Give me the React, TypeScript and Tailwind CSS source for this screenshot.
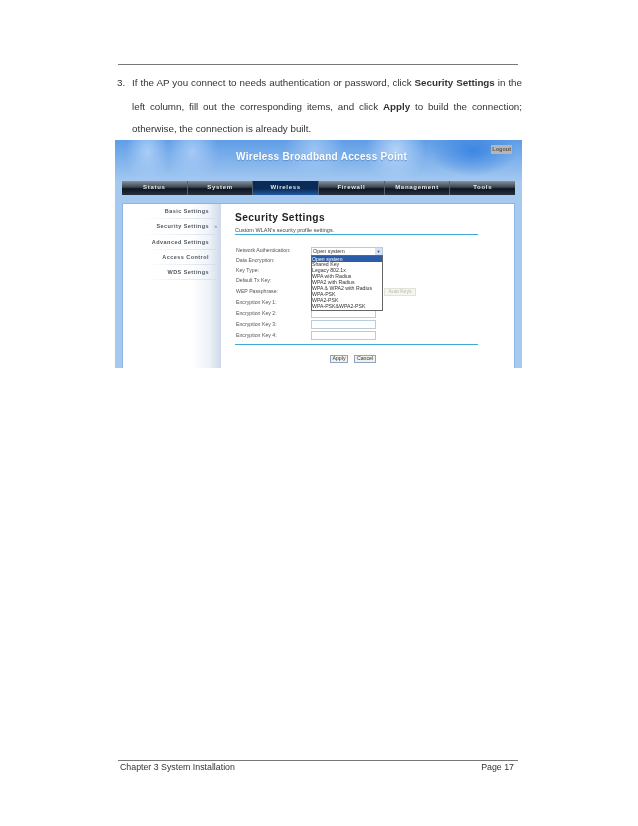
const tabs = ['Status', 'System', 'Wireless', 'Firewall', 'Management', 'Tools']
const sideItems = ['Basic Settings', 'Security Settings', 'Advanced Settings', 'Access Control', 'WDS Settings']
const options = [
  'Open system',
  'Shared Key',
  'Legacy 802.1x',
  'WPA with Radius',
  'WPA2 with Radius',
  'WPA & WPA2 with Radius',
  'WPA-PSK',
  'WPA2-PSK',
  'WPA-PSK&WPA2-PSK',
]

function FormRow({ label, height, input }: { label: string; height: string; input?: boolean }) {
  return (
    <div className={`flex items-center ${height}`}>
      <div className="w-[75px] text-[5.2px] text-[#555]">{label}</div>
      {input && <div className="h-[9px] w-[65px] border border-[#b8ccdc] bg-white" />}
    </div>
  )
}

function RouterPanel() {
  return (
    <div className="flex h-[228px] w-[407px] flex-col bg-[#a6c9ef] px-[7px] font-['Liberation_Sans',sans-serif]">
      {/* banner */}
      <div className="relative -mx-[7px] h-[41px] bg-[radial-gradient(ellipse_22px_36px_at_8%_30%,#a9cdf6_0%,transparent_100%),radial-gradient(ellipse_26px_36px_at_19%_30%,#a4c9f5_0%,transparent_100%),radial-gradient(ellipse_30px_34px_at_49%_25%,#9cc4f3_0%,transparent_100%),radial-gradient(ellipse_30px_34px_at_69%_25%,#b4d3f7_0%,transparent_100%),radial-gradient(ellipse_44px_26px_at_88%_25%,#3d86e2_0%,transparent_100%),linear-gradient(to_bottom,#5f9de7,#a3c8f0)]">
        <div className="absolute left-[121px] top-[9px] text-[10px] font-bold tracking-[0.3px] text-white [text-shadow:0_1px_1px_#5c8fcc]">
          Wireless Broadband Access Point
        </div>
        <div className="absolute right-[10px] top-[5px] bg-[#b8b6b4] px-[1px] py-[1px] text-[5.5px] font-bold leading-[7px] text-[#555]">
          Logout
        </div>
      </div>

      {/* nav */}
      <div className="flex h-[14px] bg-[linear-gradient(to_bottom,#8a929c,#39434e_45%,#0c1622_55%,#27323e)]">
        {tabs.map((tab) => (
          <div
            key={tab}
            className={`flex flex-1 items-center justify-center border-r border-[#56616d] pb-[1px] text-[6px] font-bold tracking-[0.7px] text-[#e4e8ec] last:border-0 ${
              tab === 'Wireless' ? 'bg-[linear-gradient(to_bottom,#0b2a55,#0a2a58_55%,#1f5aa0)]' : ''
            }`}
          >
            {tab}
          </div>
        ))}
      </div>

      {/* body */}
      <div className="mt-[8px] flex min-h-0 flex-1 border-x border-t border-[#8fb4e4] bg-white">
        <div className="w-[98px] shrink-0 bg-[linear-gradient(to_right,#ffffff_70%,#eef2f8_88%,#cdd9ea)]">
          {sideItems.map((item) => (
            <div key={item} className="relative flex h-[15.3px] flex-col">
              <div className="flex flex-1 items-center justify-end pr-[12px] text-[5.5px] font-bold tracking-[0.45px] text-[#4d5560]">
                {item}
              </div>
              <div className="ml-[20px] h-px bg-[linear-gradient(to_right,transparent,#d5dfeb)]" />
              {item === 'Security Settings' && (
                <span className="absolute right-[4px] top-[4px] text-[5px] text-[#5b86c4]">»</span>
              )}
            </div>
          ))}
        </div>
        <div className="relative min-w-0 flex-1 pl-[14px]">
          <div className="mt-[7px] text-[10.2px] font-bold leading-[13px] tracking-[0.4px] text-[#222]">Security Settings</div>
          <div className="mt-[3px] text-[5.5px] leading-[7px] text-[#444]">Custom WLAN's security profile settings.</div>
          <div className="h-px w-[243px] bg-[#3fa9dc]" />

          <div className="mt-[11px] w-[243px] pl-[1px]">
            <FormRow label="Network Authentication:" height="h-[10px]" />
            <FormRow label="Data Encryption:" height="h-[10px]" />
            <FormRow label="Key Type:" height="h-[10px]" />
            <FormRow label="Default Tx Key:" height="h-[10px]" />
            <FormRow label="WEP Passphrase:" height="h-[11px]" />
            <FormRow label="Encryption Key 1:" height="h-[11px]" />
            <FormRow label="Encryption Key 2:" height="h-[11px]" input />
            <FormRow label="Encryption Key 3:" height="h-[11px]" input />
            <FormRow label="Encryption Key 4:" height="h-[11px]" input />
          </div>
          <div className="mt-[3px] h-px w-[243px] bg-[#3fa9dc]" />
          <div className="mt-[10px] flex w-[243px] gap-[6px] pl-[95px]">
            <div className="flex h-[8px] w-[18px] items-center justify-center border border-[#8fa3c4] bg-[#f1f1ec] text-[5.2px] text-[#333]">Apply</div>
            <div className="flex h-[8px] w-[22px] items-center justify-center border border-[#8fa3c4] bg-[#f1f1ec] text-[5.2px] text-[#333]">Cancel</div>
          </div>

          {/* select + open list */}
          <div className="absolute left-[90px] top-[43px] flex h-[9px] w-[72px] items-center justify-between border border-[#b8ccdc] bg-white pl-[1px] text-[5.4px] text-[#333]">
            Open system
            <div className="flex h-full w-[7px] items-center justify-center bg-[#d5e2f5] text-[4px] leading-none text-[#2b4c8c]">▼</div>
          </div>
          <div className="absolute left-[90px] top-[51px] w-[72px] border border-[#666] bg-white text-[5.2px] leading-[5.9px] text-[#333]">
            {options.map((opt, i) => (
              <div key={opt} className={i === 0 ? 'bg-[#2a5caa] leading-[6.4px] text-white' : ''}>
                {opt}
              </div>
            ))}
          </div>
          <div className="absolute left-[163px] top-[84px] flex h-[8px] w-[32px] items-center justify-center border border-[#e2e2d8] bg-[#f6f6f0] text-[5px] text-[#b8b8b0]">
            Auto Keys
          </div>
        </div>
      </div>
    </div>
  )
}

export default function App() {
  return (
    <div className="flex h-[826px] w-[638px] flex-col bg-white font-['Liberation_Sans',sans-serif] text-[#333] blur-[0.35px]">
      <div className="ml-[118px] mt-[64px] h-px w-[400px] bg-[#777]" />

      <div className="ml-[117px] mt-[7px] w-[405px] text-[9.8px]">
        <div className="flex h-[23px] items-center">
          <span className="w-[15px] shrink-0">3.</span>
          <p className="flex-1 text-justify [text-align-last:justify]">
            If the AP you connect to needs authentication or password, click <b>Security Settings</b> in the
          </p>
        </div>
        <p className="ml-[15px] flex h-[24px] items-center">
          <span className="w-full text-justify [text-align-last:justify]">
            left column, fill out the corresponding items, and click <b>Apply</b> to build the connection;
          </span>
        </p>
        <p className="ml-[15px] flex h-[21px] items-center">otherwise, the connection is already built.</p>
      </div>

      <div className="ml-[115px]">
        <RouterPanel />
      </div>

      <div className="flex-1" />

      <div className="mb-[53px] ml-[118px] w-[400px] border-t border-[#777] px-[2px]">
        <div className="flex justify-between text-[8.8px] leading-[12px]">
          <span>Chapter 3 System Installation</span>
          <span className="pr-[2px]">Page 17</span>
        </div>
      </div>
    </div>
  )
}
